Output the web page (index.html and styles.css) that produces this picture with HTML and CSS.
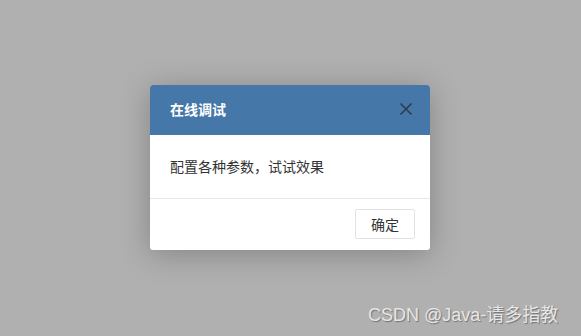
FILE: index.html
```html
<!DOCTYPE html>
<html>
<head>
<meta charset="utf-8">
<link rel="stylesheet" href="styles.css">
</head>
<body>
<div class="stage">
  <div class="dialog">
    <div class="dialog-header">
      <span class="dialog-title">在线调试</span>
      <svg class="close" width="14" height="14" viewBox="0 0 14 14"><path d="M1.5 1.5 L12.5 12.5 M12.5 1.5 L1.5 12.5" stroke="#2f3b4a" stroke-width="1.6" fill="none"/></svg>
    </div>
    <div class="dialog-body">配置各种参数，试试效果</div>
    <div class="dialog-footer">
      <button class="btn">确定</button>
    </div>
  </div>
  <div class="watermark">CSDN @Java-请多指教</div>
</div>
</body>
</html>
```
FILE: styles.css
```css
html, body {
  margin: 0;
  padding: 0;
}
body {
  width: 581px;
  height: 336px;
  overflow: hidden;
  background: #b0b0b0;
  font-family: "Microsoft YaHei", "Noto Sans CJK SC", "Liberation Sans", sans-serif;
}
.stage {
  position: relative;
  width: 581px;
  height: 336px;
  display: flex;
  justify-content: center;
  padding-top: 85px;
  box-sizing: border-box;
}
.dialog {
  width: 280px;
  height: 165px;
  margin-left: -1px;
  background: #fff;
  border-radius: 3px;
  overflow: hidden;
  box-shadow: 0 4px 30px rgba(0,0,0,0.25);
  display: flex;
  flex-direction: column;
}
.dialog-header {
  height: 50px;
  background: #4577a8;
  display: flex;
  align-items: center;
  justify-content: space-between;
  padding: 0 17px 0 20px;
  box-sizing: border-box;
}
.dialog-title {
  color: #fff;
  font-size: 14px;
  font-weight: bold;
  line-height: 20px;
  margin-top: -2px;
}
.close {
  display: block;
  margin-top: -2px;
}
.dialog-body {
  height: 64px;
  box-sizing: border-box;
  padding: 21px 20px 0;
  font-size: 14px;
  line-height: 20px;
  color: #333;
  border-bottom: 1px solid #e6e6e6;
}
.dialog-footer {
  flex: 1;
  display: flex;
  justify-content: flex-end;
  align-items: center;
  padding: 0 15px;
}
.btn {
  width: 60px;
  height: 30px;
  border: 1px solid #e3e3e3;
  border-radius: 2px;
  background: #fff;
  font-family: inherit;
  font-size: 14px;
  color: #333;
  padding: 0;
  margin-top: -1px;
}
.watermark {
  position: absolute;
  left: 368px;
  top: 303px;
  font-family: "Liberation Sans", "Noto Sans CJK SC", sans-serif;
  font-size: 18px;
  line-height: 24px;
  color: #e6e6e6;
  text-shadow: 1px 1px 1px rgba(0,0,0,0.35);
  white-space: nowrap;
}
```
